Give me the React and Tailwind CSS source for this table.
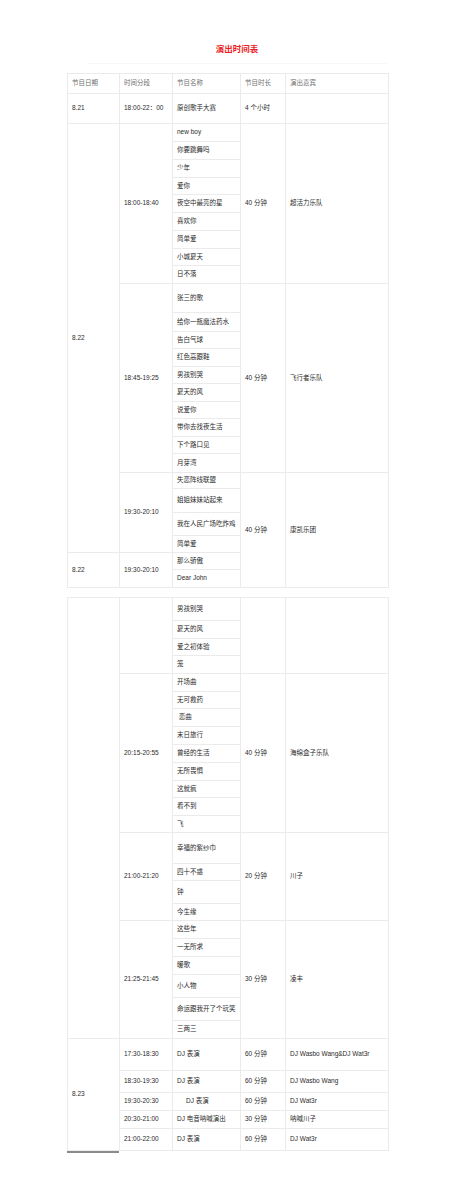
// App.jsx — 演出时间表

const c = (t, span = 1) => ({ t, span });

const table1 = [
  { h: "h-[30px]", date: c("8.21"), time: c("18:00-22：00"), song: "原创歌手大赛", dur: c("4 个小时"), guest: c("") },
  { h: "h-[18px]", date: c("8.22", 23), time: c("18:00-18:40", 9), song: "new boy", dur: c("40 分钟", 9), guest: c("超活力乐队", 9) },
  { h: "h-[18px]", song: "你要跳舞吗" },
  { h: "h-[18px]", song: "少年" },
  { h: "h-[17px]", song: "爱你" },
  { h: "h-[18px]", song: "夜空中最亮的星" },
  { h: "h-[18px]", song: "喜欢你" },
  { h: "h-[18px]", song: "简单爱" },
  { h: "h-[17px]", song: "小城夏天" },
  { h: "h-[18px]", song: "日不落" },
  { h: "h-[29px]", time: c("18:45-19:25", 10), song: "张三的歌", dur: c("40 分钟", 10), guest: c("飞行者乐队", 10) },
  { h: "h-[19px]", song: "给你一瓶魔法药水" },
  { h: "h-[17px]", song: "告白气球" },
  { h: "h-[18px]", song: "红色高跟鞋" },
  { h: "h-[17px]", song: "男孩别哭" },
  { h: "h-[18px]", song: "夏天的风" },
  { h: "h-[17px]", song: "说爱你" },
  { h: "h-[18px]", song: "带你去找夜生活" },
  { h: "h-[17px]", song: "下个路口见" },
  { h: "h-[19px]", song: "月芽湾" },
  { h: "h-[16px]", time: c("19:30-20:10", 4), song: "失恋阵线联盟", dur: c("40 分钟", 6), guest: c("康凯乐团", 6) },
  { h: "h-[24px]", song: "姐姐妹妹站起来" },
  { h: "h-[23px]", song: "我在人民广场吃炸鸡" },
  { h: "h-[17px]", song: "简单爱" },
  { h: "h-[17px]", date: c("8.22", 2), time: c("19:30-20:10", 2), song: "那么骄傲" },
  { h: "h-[18px]", song: "Dear John" },
];

const table2 = [
  { h: "h-[23px]", date: c("", 23), time: c("", 4), song: "男孩别哭", dur: c("", 4), guest: c("", 4) },
  { h: "h-[18px]", song: "夏天的风" },
  { h: "h-[17px]", song: "爱之初体验" },
  { h: "h-[18px]", song: "笼" },
  { h: "h-[18px]", time: c("20:15-20:55", 9), song: "开场曲", dur: c("40 分钟", 9), guest: c("海绵盒子乐队", 9) },
  { h: "h-[17px]", song: "无可救药" },
  { h: "h-[18px]", song: "\u00a0恋曲" },
  { h: "h-[18px]", song: "末日旅行" },
  { h: "h-[18px]", song: "曾经的生活" },
  { h: "h-[18px]", song: "无所畏惧" },
  { h: "h-[17px]", song: "这就疯" },
  { h: "h-[18px]", song: "看不到" },
  { h: "h-[17px]", song: "飞" },
  { h: "h-[31px]", time: c("21:00-21:20", 4), song: "幸福的紫纱巾", dur: c("20 分钟", 4), guest: c("川子", 4) },
  { h: "h-[17px]", song: "四十不惑" },
  { h: "h-[23px]", song: "钟" },
  { h: "h-[17px]", song: "今生缘" },
  { h: "h-[18px]", time: c("21:25-21:45", 6), song: "这些年", dur: c("30 分钟", 6), guest: c("凌丰", 6) },
  { h: "h-[18px]", song: "一无所求" },
  { h: "h-[18px]", song: "暖歌" },
  { h: "h-[23px]", song: "小人物" },
  { h: "h-[23px]", song: "命运跟我开了个玩笑" },
  { h: "h-[18px]", song: "三两三" },
  { h: "h-[32px]", date: c("8.23", 5), time: c("17:30-18:30"), song: "DJ 表演", dur: c("60 分钟"), guest: c("DJ Wasbo Wang&DJ Wat3r") },
  { h: "h-[22px]", time: c("18:30-19:30"), song: "DJ 表演", dur: c("60 分钟"), guest: c("DJ Wasbo Wang") },
  { h: "h-[18px]", time: c("19:30-20:30"), song: "DJ 表演", indent: true, dur: c("60 分钟"), guest: c("DJ Wat3r") },
  { h: "h-[18px]", time: c("20:30-21:00"), song: "DJ 电音呐喊演出", dur: c("30 分钟"), guest: c("呐喊川子") },
  { h: "h-[22px]", time: c("21:00-22:00"), song: "DJ 表演", dur: c("60 分钟"), guest: c("DJ Wat3r") },
];

const td = "border border-[#ebebeb] px-[4px] py-0 align-middle whitespace-nowrap";

const Cell = ({ cell }) =>
  cell ? (
    <td rowSpan={cell.span} className={td}>
      {cell.t}
    </td>
  ) : null;

const Schedule = ({ rows, header }) => (
  <table className="border-collapse table-fixed w-[321px] text-[6.5px] leading-none text-[#2b2b2b]">
    <colgroup>
      <col className="w-[52px]" />
      <col className="w-[53px]" />
      <col className="w-[68px]" />
      <col className="w-[45px]" />
      <col className="w-[103px]" />
    </colgroup>
    <tbody>
      {header && (
        <tr className="h-[20px] text-[#707070]">
          <td className={td}>节目日期</td>
          <td className={td}>时间分段</td>
          <td className={td}>节目名称</td>
          <td className={td}>节目时长</td>
          <td className={td}>演出嘉宾</td>
        </tr>
      )}
      {rows.map((r, i) => (
        <tr key={i} className={r.h}>
          <Cell cell={r.date} />
          <Cell cell={r.time} />
          <td className={td}>
            {r.indent ? <span className="ml-[9px]">{r.song}</span> : r.song}
          </td>
          <Cell cell={r.dur} />
          <Cell cell={r.guest} />
        </tr>
      ))}
    </tbody>
  </table>
);

export default function App() {
  return (
    <div
      className="w-[474px] min-h-[1204px] bg-white pt-[43px]"
      style={{ fontFamily: '"Liberation Sans", "Noto Sans CJK SC", sans-serif' }}
    >
      <div className="h-[12px] leading-[12px] text-center text-[8.5px] font-bold text-[#ee1c25]">
        演出时间表
      </div>
      <div className="mt-[8px] mx-[87px] h-px bg-[#f7f7f7]" />
      <div className="mt-[9px] ml-[67px] flex flex-col gap-[9px]">
        <Schedule rows={table1} header />
        <div>
          <Schedule rows={table2} />
          <div className="w-[52px] h-[2px] bg-[#8a8a8a]" />
        </div>
      </div>
    </div>
  );
}
